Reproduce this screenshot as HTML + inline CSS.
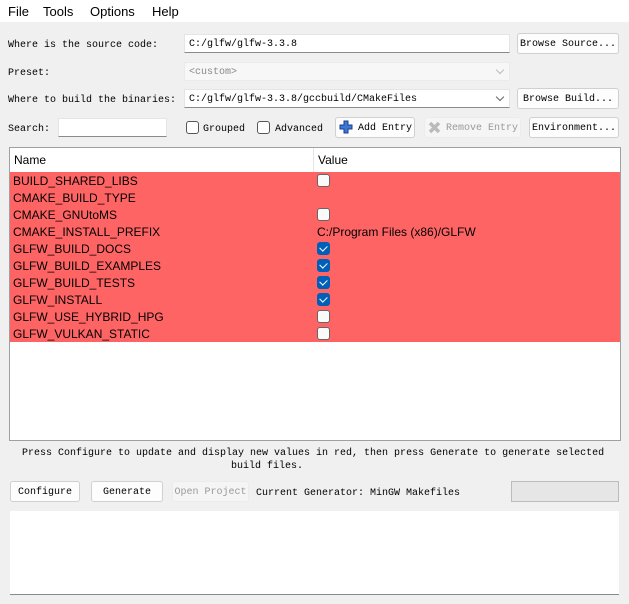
<!DOCTYPE html>
<html><head><style>
*{box-sizing:border-box;margin:0;padding:0}
body{width:629px;height:604px;background:#f0f0f0;position:relative;overflow:hidden;font-family:"Liberation Mono",monospace;font-size:10px;color:#000}
.a{position:absolute;white-space:nowrap}
.menu{left:0;top:0;width:629px;height:22px;background:#fff;font-family:"Liberation Sans",sans-serif;font-size:13px}
.inp{position:absolute;background:#fff;border:1px solid #e5e5e5;border-bottom:1px solid #8a8a8a;height:19px;padding:3px 4px;line-height:14px}
.btn{position:absolute;background:#fdfdfd;border:1px solid #d0d0d0;border-radius:3px;height:21px;line-height:21px;text-align:center}
.cb{position:absolute;width:13px;height:13px;border:1px solid #555;border-radius:3px;background:#fff}
.row{position:absolute;left:10px;width:610px;height:17px;background:#ff6464;font-family:"Liberation Sans",sans-serif;font-size:12px;line-height:18px}
.row span{position:absolute;left:3px}
.row .v{left:307px}
.c{position:absolute;left:307px;top:2px;width:13px;height:13px;border-radius:3px;background:#fafafa;border:1px solid #666}
.c.on{background:#005fb8;border-color:#005fb8}
.c.on:after{content:"";position:absolute;left:3px;top:1px;width:4px;height:6px;border:solid #fff;border-width:0 1.3px 1.3px 0;transform:rotate(45deg)}
.chev{position:absolute;right:6px;top:4px;width:6px;height:6px;border:solid #666;border-width:0 1px 1px 0;transform:rotate(45deg)}
</style></head><body>
<div class="a menu">
<span class="a" style="left:8px;top:4px">File</span>
<span class="a" style="left:43px;top:4px">Tools</span>
<span class="a" style="left:90px;top:4px">Options</span>
<span class="a" style="left:152px;top:4px">Help</span>
</div>

<span class="a" style="left:8px;top:40px">Where is the source code:</span>
<div class="inp" style="left:184px;top:34px;width:326px">C:/glfw/glfw-3.3.8</div>
<div class="btn" style="left:517px;top:33px;width:102px">Browse Source...</div>

<span class="a" style="left:8px;top:68px">Preset:</span>
<div class="inp" style="left:184px;top:62px;width:326px;border-color:#ebebeb;background:#f7f7f7;color:#888">&lt;custom&gt;<div class="chev" style="border-color:#bbb"></div></div>

<span class="a" style="left:8px;top:95px">Where to build the binaries:</span>
<div class="inp" style="left:184px;top:89px;width:326px">C:/glfw/glfw-3.3.8/gccbuild/CMakeFiles<div class="chev"></div></div>
<div class="btn" style="left:517px;top:88px;width:102px">Browse Build...</div>

<span class="a" style="left:8px;top:124px">Search:</span>
<div class="inp" style="left:58px;top:118px;width:109px;height:19px"></div>
<div class="cb" style="left:186px;top:121px"></div>
<span class="a" style="left:203px;top:124px">Grouped</span>
<div class="cb" style="left:257px;top:121px"></div>
<span class="a" style="left:275px;top:124px">Advanced</span>
<div class="btn" style="left:335px;top:117px;width:80px;text-align:left;padding-left:22px">Add Entry</div>
<svg class="a" style="left:339px;top:120px" width="14" height="14" viewBox="0 0 14 14"><path d="M5 1h4v4h4v4H9v4H5V9H1V5h4z" fill="#3c78d8" stroke="#1a3f8a" stroke-width="1"/></svg>
<div class="btn" style="left:424px;top:117px;width:97px;background:#f5f5f5;border-color:#ececec;color:#999;text-align:left;padding-left:21px">Remove Entry</div>
<svg class="a" style="left:428px;top:121px" width="13" height="13" viewBox="0 0 13 13"><path d="M2 2L11 11M11 2L2 11" stroke="#bbb" stroke-width="3.5"/></svg>
<div class="btn" style="left:529px;top:117px;width:90px">Environment...</div>

<div class="a" style="left:9px;top:147px;width:612px;height:294px;background:#fff;border:1px solid #a0a0a0"></div>
<span class="a" style="left:14px;top:153px;font-family:'Liberation Sans',sans-serif;font-size:12px">Name</span>
<div class="a" style="left:313px;top:148px;width:1px;height:24px;background:#e5e5e5"></div>
<span class="a" style="left:318px;top:153px;font-family:'Liberation Sans',sans-serif;font-size:12px">Value</span>

<div class="row" style="top:172px"><span>BUILD_SHARED_LIBS</span><div class="c"></div></div>
<div class="row" style="top:189px"><span>CMAKE_BUILD_TYPE</span></div>
<div class="row" style="top:206px"><span>CMAKE_GNUtoMS</span><div class="c"></div></div>
<div class="row" style="top:223px"><span>CMAKE_INSTALL_PREFIX</span><span class="v">C:/Program Files (x86)/GLFW</span></div>
<div class="row" style="top:240px"><span>GLFW_BUILD_DOCS</span><div class="c on"></div></div>
<div class="row" style="top:257px"><span>GLFW_BUILD_EXAMPLES</span><div class="c on"></div></div>
<div class="row" style="top:274px"><span>GLFW_BUILD_TESTS</span><div class="c on"></div></div>
<div class="row" style="top:291px"><span>GLFW_INSTALL</span><div class="c on"></div></div>
<div class="row" style="top:308px"><span>GLFW_USE_HYBRID_HPG</span><div class="c"></div></div>
<div class="row" style="top:325px"><span>GLFW_VULKAN_STATIC</span><div class="c"></div></div>

<span class="a" style="left:22px;top:448px">Press Configure to update and display new values in red, then press Generate to generate selected</span>
<span class="a" style="left:231px;top:461px">build files.</span>

<div class="btn" style="left:10px;top:481px;width:70px">Configure</div>
<div class="btn" style="left:91px;top:481px;width:72px">Generate</div>
<div class="btn" style="left:172px;top:481px;width:77px;background:#f5f5f5;border-color:#ececec;color:#999">Open Project</div>
<span class="a" style="left:256px;top:488px">Current Generator: MinGW Makefiles</span>
<div class="a" style="left:511px;top:481px;width:108px;height:21px;background:#e6e6e6;border:1px solid #bcbcbc"></div>

<div class="a" style="left:10px;top:511px;width:609px;height:84px;background:#fff;border-bottom:1px solid #8a8a8a"></div>
</body></html>
